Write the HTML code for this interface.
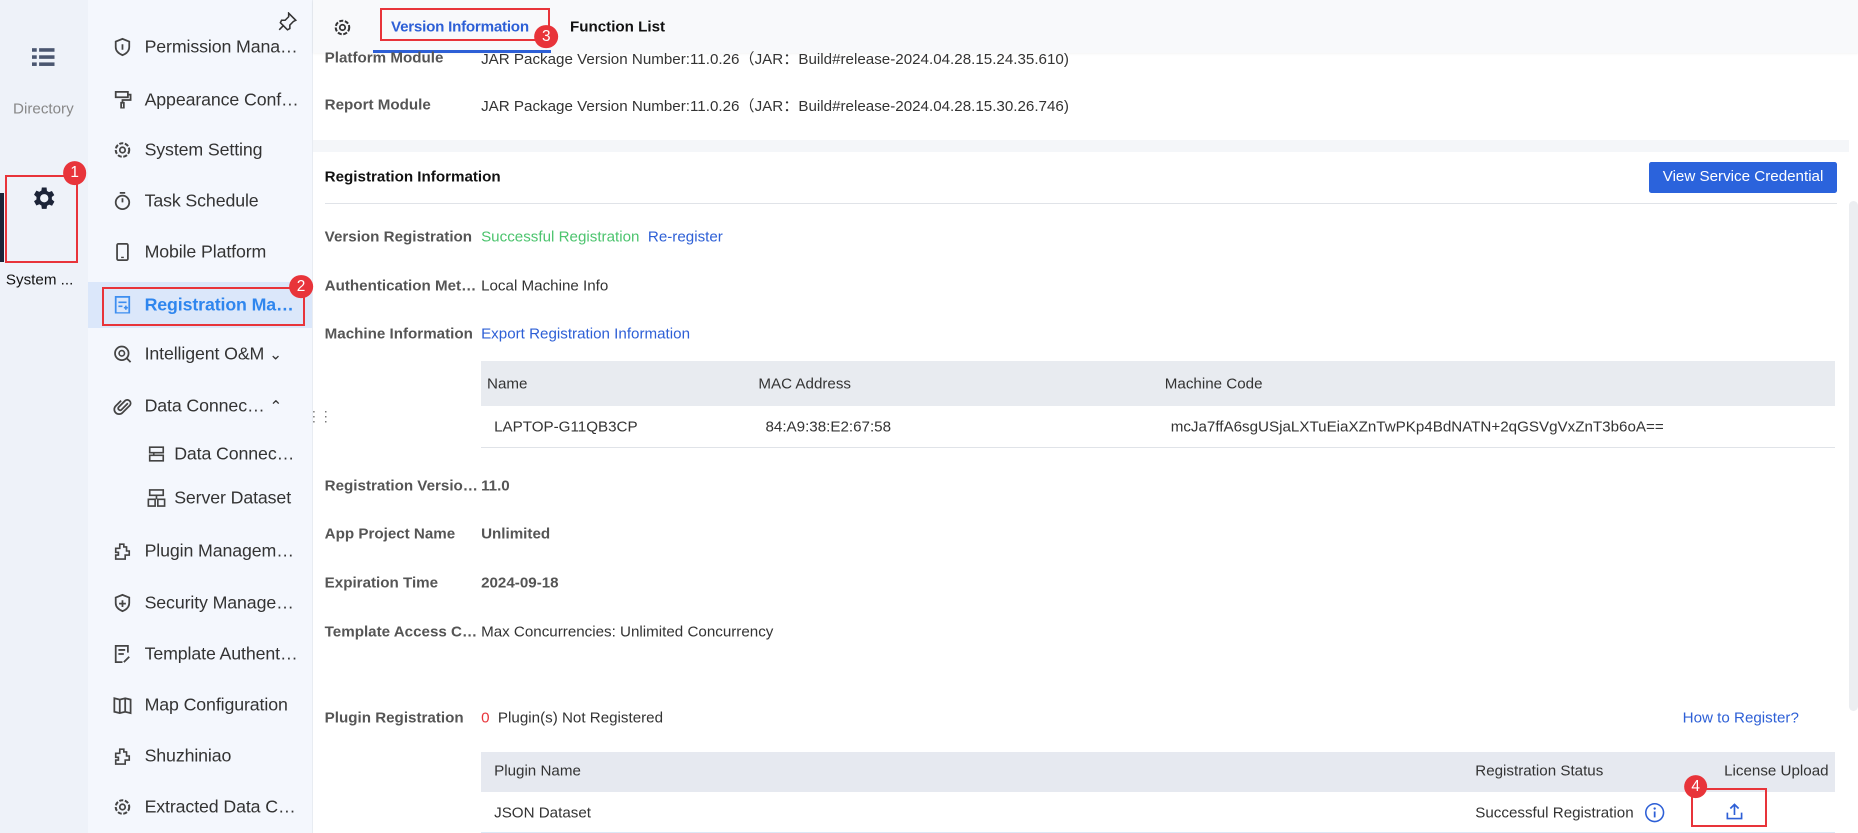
<!DOCTYPE html>
<html><head><meta charset="utf-8"><style>
html{zoom:1.18495}
body{margin:0;width:1568px;height:703px;overflow:hidden;font-family:"Liberation Sans",Arial,sans-serif;background:#fff;position:relative;color:#333}
.a{position:absolute}
.rail{left:0;top:0;width:74px;height:703px;background:#eef2f9}
.side{left:74px;top:0;width:189px;height:703px;background:#f4f7fd;border-right:1px solid #e8ecf2}
.it{position:absolute;left:122px;font-size:15px;color:#333;white-space:nowrap;transform:translateY(-50%);letter-spacing:-0.1px}
.ic{position:absolute;left:95px;width:16px;height:16px;transform:translateY(-50%)}
.lbl{position:absolute;left:274px;font-size:12.8px;color:#555;font-weight:bold;transform:translateY(-50%);white-space:nowrap}
.val{position:absolute;left:406px;font-size:12.8px;color:#333;transform:translateY(-50%);white-space:nowrap}
.red{position:absolute;border:2px solid #e8343a;box-sizing:border-box}
.bd{position:absolute;width:20px;height:20px;border-radius:50%;background:#e8343a;color:#fff;font-size:13px;text-align:center;line-height:20px;transform:translate(-50%,-50%)}
.t{position:absolute;font-size:12.8px;transform:translateY(-50%);white-space:nowrap}
</style></head><body>
<div class="a rail"></div>
<svg class="a" style="left:27px;top:40px" width="20" height="16" viewBox="0 0 20 16"><g fill="#4a5670"><rect x="0" y="1" width="4" height="3"/><rect x="6" y="1" width="13" height="3"/><rect x="0" y="7" width="4" height="3"/><rect x="6" y="7" width="13" height="3"/><rect x="0" y="13" width="4" height="3"/><rect x="6" y="13" width="13" height="3"/></g></svg>
<div class="t" style="left:11px;top:92px;color:#888">Directory</div>
<div class="a" style="left:0;top:163px;width:3px;height:58px;background:#1c2438"></div>
<svg class="a" style="left:25px;top:155px" width="24" height="24" viewBox="0 0 24 24"><path fill="#1c2438" d="M19.4 13a7.5 7.5 0 0 0 0-2l2.1-1.6-2-3.5-2.5 1a7.5 7.5 0 0 0-1.7-1L15 3h-4l-.4 2.6a7.5 7.5 0 0 0-1.7 1l-2.5-1-2 3.5L6.5 11a7.5 7.5 0 0 0 0 2l-2.1 1.6 2 3.5 2.5-1a7.5 7.5 0 0 0 1.7 1L11 21h4l.4-2.6a7.5 7.5 0 0 0 1.7-1l2.5 1 2-3.5zM13 15.5A3.5 3.5 0 1 1 13 8.5a3.5 3.5 0 0 1 0 7z" transform="translate(-1 0)"/></svg>
<div class="t" style="left:5px;top:236px;color:#111">System ...</div>
<div class="red" style="left:4px;top:148px;width:62px;height:74px"></div>
<div class="bd" style="left:63px;top:146px">1</div>

<div class="a side"></div>
<svg class="a" style="left:235px;top:10px" width="16" height="16" viewBox="0 0 16 16"><path d="M9 1l6 6-2 1-3 3 0 3-2 1-6-6 1-2 3 0 3-3z M1 15l4-4" fill="none" stroke="#333" stroke-width="1.3"/></svg>
<div class="a" style="left:74px;top:238px;width:189px;height:39px;background:#dbe7fa"></div>

<svg class="ic" style="top:40px" viewBox="0 0 14 14"><path d="M7 1l5 2v4c0 3-2.5 5-5 6-2.5-1-5-3-5-6V3z M7 5v4" fill="none" stroke="#444" stroke-width="1.3"/></svg><div class="it" style="top:40px">Permission Mana…</div>
<svg class="ic" style="top:84px" viewBox="0 0 14 14"><path d="M2 1h9v4H2z M11 3h2v4H7v2 M6 9h2v4H6z" fill="none" stroke="#444" stroke-width="1.3"/></svg><div class="it" style="top:84px">Appearance Conf…</div>
<svg class="ic" style="top:127px" viewBox="0 0 14 14"><circle cx="7" cy="7" r="5" fill="none" stroke="#444" stroke-width="1.5" stroke-dasharray="3 1.2"/><circle cx="7" cy="7" r="2" fill="none" stroke="#444" stroke-width="1.3"/></svg><div class="it" style="top:127px">System Setting</div>
<svg class="ic" style="top:170px" viewBox="0 0 14 14"><circle cx="7" cy="8" r="5" fill="none" stroke="#444" stroke-width="1.3"/><path d="M5 1h4M7 8V5" stroke="#444" stroke-width="1.3"/></svg><div class="it" style="top:170px">Task Schedule</div>
<svg class="ic" style="top:213px" viewBox="0 0 14 14"><rect x="3" y="1" width="8" height="12" rx="1" fill="none" stroke="#444" stroke-width="1.3"/><path d="M6 11h2" stroke="#444"/></svg><div class="it" style="top:213px">Mobile Platform</div>
<svg class="ic" style="top:257px" viewBox="0 0 14 14"><rect x="2" y="1" width="10" height="12" fill="none" stroke="#3d8ef0" stroke-width="1.3"/><path d="M4 5h6M4 8h3M8 9h3M9.5 7.5v3" stroke="#3d8ef0" stroke-width="1.2"/></svg><div class="it" style="top:257px;color:#2f86ee;font-weight:bold">Registration Ma…</div>
<svg class="ic" style="top:299px" viewBox="0 0 14 14"><circle cx="6.5" cy="6.5" r="5" fill="none" stroke="#444" stroke-width="1.3"/><circle cx="6.5" cy="6.5" r="2" fill="none" stroke="#444" stroke-width="1.2"/><path d="M10 10l3 3" stroke="#444" stroke-width="1.3"/></svg><div class="it" style="top:299px">Intelligent O&amp;M <span style="font-size:13px">&#8964;</span></div>
<svg class="ic" style="top:343px" viewBox="0 0 14 14"><path d="M11 5L6 10a1.5 1.5 0 0 1-2-2l5-5a2.5 2.5 0 0 1 3.5 3.5L7 12a3.5 3.5 0 0 1-5-5l4-4" fill="none" stroke="#444" stroke-width="1.3"/></svg><div class="it" style="top:343px">Data Connec… <span style="font-size:13px">&#8963;</span></div>
<svg class="ic" style="top:383px;left:124px" viewBox="0 0 14 14"><path d="M2 2h10v4H2z M5 6v2 M2 8h10v4H2z" fill="none" stroke="#444" stroke-width="1.2"/></svg><div class="it" style="top:383px;left:147px">Data Connec…</div>
<svg class="ic" style="top:420px;left:124px" viewBox="0 0 14 14"><path d="M2 1h10v4H2z M7 5v3 M1 8h5v5H1z M8 8h5v5H8z" fill="none" stroke="#444" stroke-width="1.2"/></svg><div class="it" style="top:420px;left:147px">Server Dataset</div>
<svg class="ic" style="top:465px" viewBox="0 0 14 14"><path d="M5 2h3v2h2v3h2v3H9v3H2v-3h2V8H2V5h3z" fill="none" stroke="#444" stroke-width="1.2"/></svg><div class="it" style="top:465px">Plugin Managem…</div>
<svg class="ic" style="top:509px" viewBox="0 0 14 14"><path d="M7 1l5 2v4c0 3-2.5 5-5 6-2.5-1-5-3-5-6V3z M7 5v5M4.5 7.5h5" fill="none" stroke="#444" stroke-width="1.3"/></svg><div class="it" style="top:509px">Security Manage…</div>
<svg class="ic" style="top:552px" viewBox="0 0 14 14"><path d="M11 6V1H2v12h5 M4 4h5M4 7h4 M8 13l4-4" fill="none" stroke="#444" stroke-width="1.3"/></svg><div class="it" style="top:552px">Template Authent…</div>
<svg class="ic" style="top:595px" viewBox="0 0 14 14"><path d="M1 2l4 1 4-1 4 1v10l-4-1-4 1-4-1z M5 3v10M9 2v10" fill="none" stroke="#444" stroke-width="1.3"/></svg><div class="it" style="top:595px">Map Configuration</div>
<svg class="ic" style="top:638px" viewBox="0 0 14 14"><path d="M5 2h3v2h2v3h2v3H9v3H2v-3h2V8H2V5h3z" fill="none" stroke="#444" stroke-width="1.2"/></svg><div class="it" style="top:638px">Shuzhiniao</div>
<svg class="ic" style="top:681px" viewBox="0 0 14 14"><circle cx="7" cy="7" r="5" fill="none" stroke="#444" stroke-width="1.5" stroke-dasharray="3 1.2"/><circle cx="7" cy="7" r="2" fill="none" stroke="#444" stroke-width="1.3"/></svg><div class="it" style="top:681px">Extracted Data C…</div>
<div class="red" style="left:86px;top:242px;width:171px;height:33px"></div>
<div class="bd" style="left:254px;top:242px">2</div>
<div class="t" style="left:259px;top:352px;color:#777;font-size:12px;letter-spacing:-2px">⋮⋮</div>

<div class="a" style="left:264px;top:0;width:1304px;height:45px;background:#f8f9fb;box-shadow:0 1px 2px rgba(0,0,0,.06)"></div>
<svg class="a" style="left:281px;top:15px" width="16" height="16" viewBox="0 0 14 14"><circle cx="7" cy="7" r="5" fill="none" stroke="#333" stroke-width="1.5" stroke-dasharray="3 1.2"/><circle cx="7" cy="7" r="2" fill="none" stroke="#333" stroke-width="1.3"/></svg>
<div class="t" style="left:330px;top:23px;color:#2d5fd6;font-weight:bold;letter-spacing:-0.2px">Version Information</div>
<div class="a" style="left:315px;top:42px;width:150px;height:3px;background:#2d5fd6"></div>
<div class="t" style="left:481px;top:23px;color:#111;font-weight:bold">Function List</div>
<div class="red" style="left:321px;top:7px;width:143px;height:28px"></div>
<div class="bd" style="left:461px;top:31px">3</div>

<div class="lbl" style="top:49px">Platform Module</div><div class="val" style="top:49px">JAR Package Version Number:11.0.26（JAR：Build#release-2024.04.28.15.24.35.610)</div>
<div class="lbl" style="top:89px">Report Module</div><div class="val" style="top:89px">JAR Package Version Number:11.0.26（JAR：Build#release-2024.04.28.15.30.26.746)</div>
<div class="a" style="left:264px;top:118px;width:1296px;height:10px;background:#f4f6f9"></div>

<div class="t" style="left:274px;top:149px;font-weight:bold;color:#111">Registration Information</div>
<div class="a" style="left:1392px;top:137px;width:158px;height:26px;background:#2b63dc;border-radius:2px;color:#fff;font-size:12.8px;text-align:center;line-height:26px">View Service Credential</div>
<div class="a" style="left:274px;top:171px;width:1276px;height:1px;background:#e0e3e8"></div>

<div class="lbl" style="top:200px">Version Registration</div><div class="val" style="top:200px;color:#4cc46e">Successful Registration <span style="color:#2d5fd6">&nbsp;Re-register</span></div>
<div class="lbl" style="top:241px">Authentication Met…</div><div class="val" style="top:241px">Local Machine Info</div>
<div class="lbl" style="top:282px">Machine Information</div><div class="val" style="top:282px;color:#2d5fd6">Export Registration Information</div>

<div class="a" style="left:406px;top:305px;width:1143px;height:38px;background:#e8ebf0"></div>
<div class="a" style="left:406px;top:377px;width:1143px;height:1px;background:#e0e3e8"></div>
<div class="t" style="left:411px;top:324px">Name</div><div class="t" style="left:640px;top:324px">MAC Address</div><div class="t" style="left:983px;top:324px">Machine Code</div>
<div class="t" style="left:417px;top:360px">LAPTOP-G11QB3CP</div><div class="t" style="left:646px;top:360px">84:A9:38:E2:67:58</div><div class="t" style="left:988px;top:360px">mcJa7ffA6sgUSjaLXTuEiaXZnTwPKp4BdNATN+2qGSVgVxZnT3b6oA==</div>

<div class="lbl" style="top:410px">Registration Versio…</div><div class="val" style="top:410px;font-weight:bold;color:#555">11.0</div>
<div class="lbl" style="top:451px">App Project Name</div><div class="val" style="top:451px;font-weight:bold;color:#555">Unlimited</div>
<div class="lbl" style="top:492px">Expiration Time</div><div class="val" style="top:492px;font-weight:bold;color:#555">2024-09-18</div>
<div class="lbl" style="top:533px">Template Access C…</div><div class="val" style="top:533px">Max Concurrencies: Unlimited Concurrency</div>

<div class="lbl" style="top:606px">Plugin Registration</div><div class="val" style="top:606px"><span style="color:#e8343a">0</span>&nbsp; Plugin(s) Not Registered</div>
<div class="t" style="left:1420px;top:606px;color:#2d5fd6">How to Register?</div>
<div class="a" style="left:406px;top:635px;width:1143px;height:33px;background:#e6e9f0"></div>
<div class="a" style="left:406px;top:702px;width:1143px;height:1px;background:#dbe7f5"></div>
<div class="t" style="left:417px;top:651px">Plugin Name</div><div class="t" style="left:1245px;top:651px">Registration Status</div><div class="t" style="left:1455px;top:651px">License Upload</div>
<div class="t" style="left:417px;top:686px">JSON Dataset</div><div class="t" style="left:1245px;top:686px">Successful Registration</div>
<svg class="a" style="left:1387px;top:677px" width="18" height="18" viewBox="0 0 18 18"><circle cx="9" cy="9" r="7.5" fill="none" stroke="#2d5fd6" stroke-width="1.3"/><path d="M9 8v5" stroke="#2d5fd6" stroke-width="1.5"/><circle cx="9" cy="5.5" r="1" fill="#2d5fd6"/></svg>
<svg class="a" style="left:1456px;top:677px" width="16" height="16" viewBox="0 0 16 16"><path d="M2 9v5h12V9 M8 11V2 M4.5 5.5L8 2l3.5 3.5" fill="none" stroke="#2d5fd6" stroke-width="1.4"/></svg>
<div class="red" style="left:1427px;top:665px;width:64px;height:33px"></div>
<div class="bd" style="left:1431px;top:664px">4</div>

<div class="a" style="left:1560px;top:170px;width:8px;height:430px;background:#eceef1;border-radius:4px"></div>
</body></html>
